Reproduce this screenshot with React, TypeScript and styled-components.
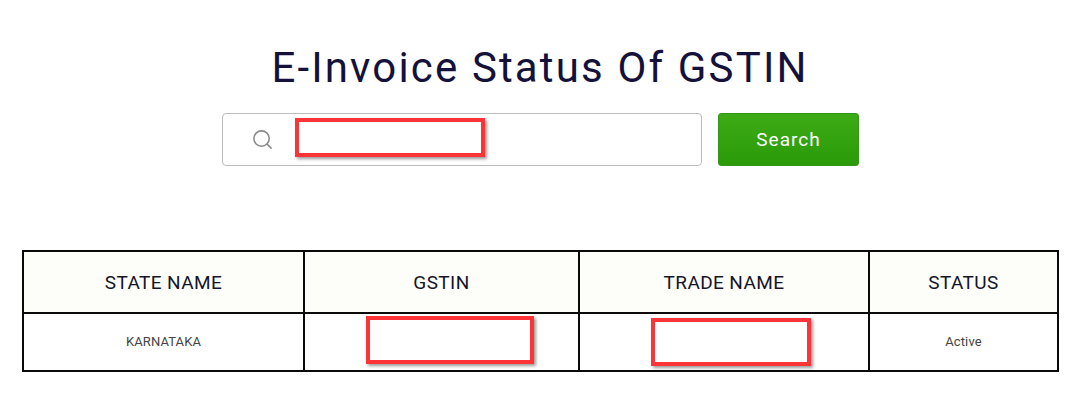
import React from 'react';
import styled, { createGlobalStyle } from 'styled-components';
import { Search } from 'lucide-react';

const GlobalStyle = createGlobalStyle`
  html, body {
    margin: 0;
    padding: 0;
    background: #fff;
    font-family: Roboto, "Liberation Sans", sans-serif;
  }
`;

const Page = styled.div`
  width: 1080px;
  height: 409px;
  overflow: hidden;
  padding-top: 41px;
  box-sizing: border-box;
`;

const Title = styled.h1`
  margin: 0;
  text-align: center;
  font-size: 42px;
  line-height: 54px;
  font-weight: 400;
  letter-spacing: 2.15px;
  color: #14123a;
`;

const SearchRow = styled.div`
  display: flex;
  margin: 18px 0 0 222px;
  gap: 16px;
`;

const InputBox = styled.div`
  position: relative;
  width: 480px;
  height: 53px;
  box-sizing: border-box;
  display: flex;
  align-items: center;
  padding-left: 28px;
  border: 1px solid #bcbcbc;
  border-radius: 4px;
  color: #8a8a8a;
`;

const SearchButton = styled.button`
  width: 141px;
  height: 53px;
  border: 1px solid #33951a;
  border-radius: 3px;
  background: linear-gradient(180deg, #3cab16 0%, #2b9a08 100%);
  color: #fff;
  font-family: inherit;
  font-size: 19px;
  font-weight: 400;
  letter-spacing: 1px;
`;

const Redaction = styled.div<{ $left: number; $top: number; $width: number; $height: number }>`
  position: absolute;
  left: ${p => p.$left}px;
  top: ${p => p.$top}px;
  width: ${p => p.$width}px;
  height: ${p => p.$height}px;
  box-sizing: border-box;
  border: 4px solid #fc3337;
  box-shadow: 2px 2px 3px rgba(0, 0, 0, 0.4);
`;

const Table = styled.table`
  position: relative;
  table-layout: fixed;
  border-collapse: collapse;
  width: 1035px;
  margin: 84px 0 0 22px;
  box-sizing: border-box;
`;

const HeadCell = styled.th`
  position: relative;
  height: 60px;
  padding: 0;
  border: 2px solid #0a0a0a;
  background: #fdfef9;
  font-size: 19px;
  font-weight: 400;
  letter-spacing: 0.4px;
  color: #15152a;
  text-align: center;
`;

const BodyCell = styled.td`
  position: relative;
  height: 54px;
  padding: 0 0 2px;
  border: 2px solid #0a0a0a;
  font-size: 13px;
  letter-spacing: 0.1px;
  color: #444;
  text-align: center;
`;

export default function App() {
  return (
    <Page>
      <GlobalStyle />
      <Title>E-Invoice Status Of GSTIN</Title>
      <SearchRow>
        <InputBox>
          <Search size={23} strokeWidth={1.6} />
          <Redaction $left={72} $top={4} $width={190} $height={39} />
        </InputBox>
        <SearchButton>Search</SearchButton>
      </SearchRow>
      <Table>
        <colgroup>
          <col style={{ width: 281 }} />
          <col style={{ width: 275 }} />
          <col style={{ width: 290 }} />
          <col style={{ width: 189 }} />
        </colgroup>
        <thead>
          <tr>
            <HeadCell>STATE NAME</HeadCell>
            <HeadCell>GSTIN</HeadCell>
            <HeadCell>TRADE NAME</HeadCell>
            <HeadCell>STATUS</HeadCell>
          </tr>
        </thead>
        <tbody>
          <tr>
            <BodyCell>KARNATAKA</BodyCell>
            <BodyCell>
              <Redaction $left={61} $top={2} $width={168} $height={48} />
            </BodyCell>
            <BodyCell>
              <Redaction $left={71} $top={4} $width={160} $height={48} />
            </BodyCell>
            <BodyCell>Active</BodyCell>
          </tr>
        </tbody>
      </Table>
    </Page>
  );
}
